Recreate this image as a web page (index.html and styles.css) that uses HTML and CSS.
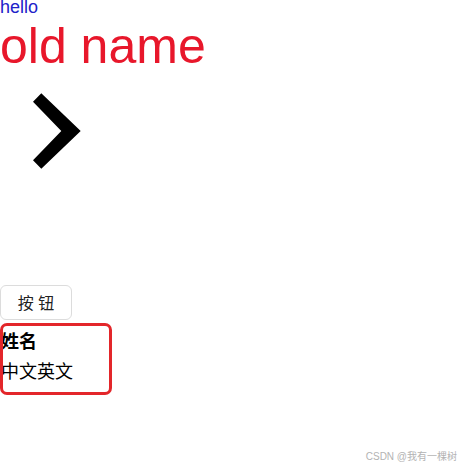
FILE: index.html
```html
<!DOCTYPE html>
<html lang="zh">
<head>
<meta charset="utf-8">
<title>demo</title>
<link rel="stylesheet" href="styles.css">
</head>
<body>
<div class="hello">hello</div>
<h1 class="title">old name</h1>
<svg class="chev" width="50" height="78" viewBox="0 0 50 78" aria-hidden="true">
  <polygon points="9.3,1.3 48.7,39 9.3,76.7 1,68.3 29.3,39 1,9.7" fill="#000"/>
</svg>
<button class="btn" type="button">按 钮</button>
<div class="card">
  <div class="name">姓名</div>
  <div class="value">中文英文</div>
  <div class="frame"></div>
</div>
<div class="watermark">CSDN @我有一棵树</div>
</body>
</html>
```

FILE: styles.css
```css
html, body {
  margin: 0;
  padding: 0;
  background: #fff;
}
body {
  position: relative;
  min-height: 467px;
  font-family: "Liberation Sans", "Noto Sans CJK SC", sans-serif;
}
.hello {
  font-size: 18px;
  line-height: 14px;
  color: #2121c9;
}
.title {
  margin: 3px 0 0 0;
  font-size: 50px;
  font-weight: normal;
  line-height: normal;
  color: #e8172b;
}
.chev {
  display: block;
  margin: 16.5px 0 0 32px;
}
.btn {
  display: block;
  margin-top: 115px;
  width: 72px;
  height: 35px;
  box-sizing: border-box;
  padding: 0;
  border: 1px solid #dcdcdc;
  border-radius: 6px;
  background: #fff;
  color: #222;
  font-family: "Liberation Sans", "Noto Sans CJK SC", sans-serif;
  font-size: 16px;
}
.card {
  position: relative;
  margin-top: 3px;
  width: 112px;
  height: 72px;
  box-sizing: border-box;
  padding: 4px 0 0 1px;
  font-size: 18px;
  line-height: 30px;
  color: #000;
}
.name {
  font-weight: bold;
}
.frame {
  position: absolute;
  inset: 0;
  border: 3px solid #e3262a;
  border-radius: 7px;
}
.watermark {
  position: absolute;
  right: 17px;
  bottom: 4px;
  font-size: 10px;
  color: #b3b3b3;
}
```
